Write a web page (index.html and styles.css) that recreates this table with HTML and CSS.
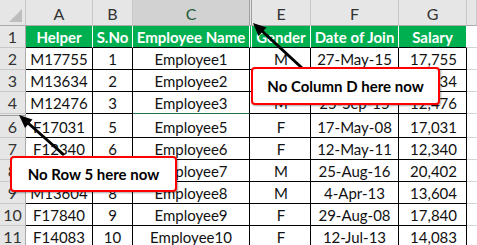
FILE: index.html
```html
<!DOCTYPE html>
<html>
<head>
<meta charset="utf-8">
<link rel="stylesheet" href="styles.css">
</head>
<body>
<div class="stage">
  <div class="sheet">
    <!-- column headers -->
    <div class="ch corner"><span class="tri"></span></div>
    <div class="ch">A</div>
    <div class="ch">B</div>
    <div class="ch sel">C</div>
    <div class="ch hid"></div>
    <div class="ch">E</div>
    <div class="ch">F</div>
    <div class="ch">G</div>
    <div class="ch"></div>

    <!-- row 1 -->
    <div class="rh">1</div>
    <div class="hd">Helper</div>
    <div class="hd">S.No</div>
    <div class="hd">Employee Name</div>
    <div class="hd gap"></div>
    <div class="hd">Gender</div>
    <div class="hd">Date of Join</div>
    <div class="hd">Salary</div>
    <div class="ex"></div>

    <!-- row 2 -->
    <div class="rh">2</div>
    <div class="c">M17755</div><div class="c">1</div><div class="c">Employee1</div><div class="c d"></div><div class="c">M</div><div class="c">27-May-15</div><div class="c n">17,755</div><div class="ex"></div>
    <!-- row 3 -->
    <div class="rh">3</div>
    <div class="c">M13634</div><div class="c">2</div><div class="c">Employee2</div><div class="c d"></div><div class="c">M</div><div class="c">22-Jan-12</div><div class="c n">13,634</div><div class="ex"></div>
    <!-- row 4 -->
    <div class="rh">4</div>
    <div class="c">M12476</div><div class="c">3</div><div class="c act">Employee3</div><div class="c d"></div><div class="c">M</div><div class="c">25-Sep-15</div><div class="c n">12,476</div><div class="ex"></div>
    <!-- row 5 (hidden) -->
    <div class="rh h5"></div>
    <div class="c z"></div><div class="c z"></div><div class="c z"></div><div class="c d z"></div><div class="c z"></div><div class="c z"></div><div class="c z"></div><div class="ex z"></div>
    <!-- row 6 -->
    <div class="rh">6</div>
    <div class="c">F17031</div><div class="c">5</div><div class="c">Employee5</div><div class="c d"></div><div class="c">F</div><div class="c">17-May-08</div><div class="c n">17,031</div><div class="ex"></div>
    <!-- row 7 -->
    <div class="rh">7</div>
    <div class="c">F12340</div><div class="c">6</div><div class="c">Employee6</div><div class="c d"></div><div class="c">F</div><div class="c">12-May-11</div><div class="c n">12,340</div><div class="ex"></div>
    <!-- row 8 -->
    <div class="rh">8</div>
    <div class="c">M20402</div><div class="c">7</div><div class="c">Employee7</div><div class="c d"></div><div class="c">M</div><div class="c">25-Aug-16</div><div class="c n">20,402</div><div class="ex"></div>
    <!-- row 9 -->
    <div class="rh">9</div>
    <div class="c">M13604</div><div class="c">8</div><div class="c">Employee8</div><div class="c d"></div><div class="c">M</div><div class="c">4-Apr-13</div><div class="c n">13,604</div><div class="ex"></div>
    <!-- row 10 -->
    <div class="rh">10</div>
    <div class="c">F17840</div><div class="c">9</div><div class="c">Employee9</div><div class="c d"></div><div class="c">F</div><div class="c">29-Aug-08</div><div class="c n">17,840</div><div class="ex"></div>
    <!-- row 11 -->
    <div class="rh">11</div>
    <div class="c">F14083</div><div class="c">10</div><div class="c">Employee10</div><div class="c d"></div><div class="c">F</div><div class="c">12-Jul-13</div><div class="c n">14,083</div><div class="ex"></div>
  </div>

  <svg class="arrows" width="477" height="245" viewBox="0 0 477 245">
    <line x1="302" y1="68" x2="262" y2="31" stroke="#000" stroke-width="3"/>
    <polygon points="253,23 266.5,27.5 258.5,36" fill="#000"/>
    <line x1="64" y1="155" x2="28" y2="123" stroke="#000" stroke-width="3"/>
    <polygon points="19,115 32.5,119.5 25,128" fill="#000"/>
  </svg>

  <div class="callout col-d">No Column D here now</div>
  <div class="callout row-5">No Row 5 here now</div>
</div>
</body>
</html>
```

FILE: styles.css
```css
html, body {
  margin: 0;
  padding: 0;
  background: #fff;
}
body {
  width: 477px;
  height: 245px;
  overflow: hidden;
  font-family: Lato, "Liberation Sans", sans-serif;
}
.stage {
  position: relative;
  width: 477px;
  height: 245px;
  overflow: hidden;
}
.sheet {
  display: grid;
  grid-template-columns: 26px 67px 40px 117px 2px 59px 88px 68px 1fr;
  grid-template-rows: 26px repeat(4, 22px) 2px repeat(6, 22px);
  width: 477px;
}
.sheet > div {
  box-sizing: border-box;
  display: flex;
  align-items: center;
  justify-content: center;
  white-space: nowrap;
  overflow: hidden;
}
.ch {
  background: #e6e6e6;
  border-right: 1px solid #c8c8c8;
  border-bottom: 1px solid #ababab;
  color: #333;
  font-size: 16px;
  padding-top: 1px;
}
.ch.sel {
  background: #d2d2d2;
  color: #1f5c37;
  border-right-color: #9e9e9e;
}
.ch.hid {
  background: #e6e6e6;
  border-right: 1px solid #9e9e9e;
}
.corner {
  position: relative;
}
.tri {
  position: absolute;
  right: 3px;
  bottom: 3px;
  width: 0;
  height: 0;
  border-left: 13px solid transparent;
  border-bottom: 13px solid #bdbdbd;
}
.rh {
  background: #e6e6e6;
  border-right: 1px solid #ababab;
  border-bottom: 1px solid #c8c8c8;
  color: #333;
  font-size: 16px;
}
.rh.h5 {
  border-bottom-color: #9e9e9e;
}
.hd {
  background: #00b050;
  color: #fff;
  font-weight: 700;
  font-size: 15px;
  border-right: 1px solid #fff;
  border-bottom: 1px solid #000;
}
.hd.gap {
  border-right: 1px solid #fff;
}
.c {
  background: #fff;
  color: #111;
  font-size: 15px;
  border-right: 1px solid #000;
  border-bottom: 1px solid #000;
}
.c.d {
  border-right: 0;
}
.c.act {
  border-bottom: 1px solid #217346;
}
.c.z,
.ex.z {
  border-bottom: 0;
}
.c.n {
  justify-content: flex-end;
  padding-right: 9px;
}
.ex {
  background: #fff;
  border-bottom: 1px solid #d4d4d4;
}
.arrows {
  position: absolute;
  left: 0;
  top: 0;
  pointer-events: none;
}
.callout {
  position: absolute;
  box-sizing: border-box;
  background: #fff;
  border: 2px solid #ff0000;
  border-radius: 4px;
  box-shadow: 1px 1px 2px rgba(0, 0, 0, 0.35);
  color: #000;
  font-weight: 700;
  font-size: 15px;
  display: flex;
  align-items: center;
  justify-content: center;
}
.col-d {
  left: 251px;
  top: 67px;
  width: 189px;
  height: 38px;
}
.row-5 {
  left: 10px;
  top: 156px;
  width: 167px;
  height: 36px;
}
```
